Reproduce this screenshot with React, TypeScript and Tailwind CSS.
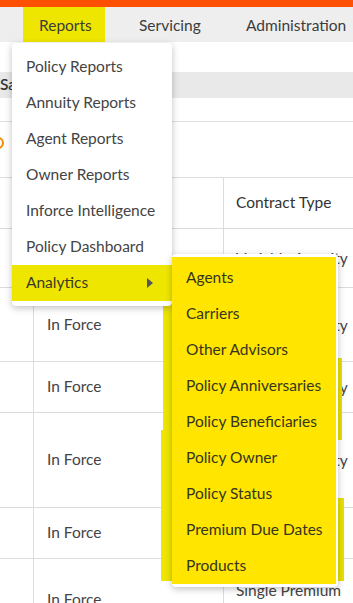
import * as React from "react";

const REPORT_ITEMS = [
  "Policy Reports",
  "Annuity Reports",
  "Agent Reports",
  "Owner Reports",
  "Inforce Intelligence",
  "Policy Dashboard",
];

const ANALYTICS_ITEMS = [
  "Agents",
  "Carriers",
  "Other Advisors",
  "Policy Anniversaries",
  "Policy Beneficiaries",
  "Policy Owner",
  "Policy Status",
  "Premium Due Dates",
  "Products",
];

type Row = { height: string; status: string; contract: string };

const ROWS: Row[] = [
  { height: "h-[59px]", status: "In Force", contract: "Variable Annuity" },
  { height: "h-[74px]", status: "In Force", contract: "Variable Annuity" },
  { height: "h-[51px]", status: "In Force", contract: "Variable Annuity" },
  { height: "h-[95px]", status: "In Force", contract: "Variable Annuity" },
  { height: "h-[51px]", status: "In Force", contract: "Fixed Annuity" },
  { height: "h-[82px]", status: "In Force", contract: "Single Premium Immediate Annuity" },
];

function NavBar() {
  return (
    <nav className="flex h-[35px] items-stretch bg-[#eeeeee] pt-[3px] text-[15.5px] text-[#3c3c3c]">
      <div className="w-[23px]" />
      <div className="-mt-[3px] flex w-[82px] items-center bg-[#efe600] pl-[16px] pt-[3px]">Reports</div>
      <div className="ml-[34px] flex w-[107px] items-center">Servicing</div>
      <div className="flex items-center whitespace-nowrap">Administration</div>
    </nav>
  );
}

function PolicyTable() {
  return (
    <div className="w-[440px] text-[15.5px] text-[#444]">
      <div className="flex h-[51px] border-b border-[#dcdcdc]">
        <div className="w-[33px]" />
        <div className="w-[190px] border-l border-[#dcdcdc]" />
        <div className="flex w-[150px] items-center border-l border-[#dcdcdc] pl-[12px] text-[#333]">
          Contract Type
        </div>
      </div>
      {ROWS.map((row, i) => (
        <div key={i} className={`flex border-b border-[#dcdcdc] ${row.height}`}>
          <div className="w-[33px]" />
          <div className="flex w-[190px] items-center border-l border-[#dcdcdc] pl-[13px]">
            {row.status}
          </div>
          <div className="flex w-[150px] items-center border-l border-[#dcdcdc] pl-[12px] leading-[20px]">
            {row.contract}
          </div>
        </div>
      ))}
    </div>
  );
}

function ReportsMenu() {
  return (
    <div className="absolute left-[12px] top-[43px] w-[160px] rounded-[4px] bg-white pb-[5px] pt-[6px] text-[15.5px] text-[#444] shadow-[0_2px_7px_rgba(0,0,0,0.25)]">
      {REPORT_ITEMS.map((label) => (
        <div key={label} className="flex h-[36px] items-center whitespace-nowrap pl-[14px]">
          {label}
        </div>
      ))}
      <div className="flex h-[36px] items-center justify-between bg-[#efe600] pl-[14px] pr-[19px] text-[#3a3a2a]">
        Analytics
        <svg width="6" height="10" viewBox="0 0 6 10" aria-hidden>
          <path d="M0 0 L6 5 L0 10 Z" fill="#555" />
        </svg>
      </div>
    </div>
  );
}

function AnalyticsMenu() {
  return (
    <div className="absolute left-[172px] top-[254px] w-[166px] rounded-[4px] bg-white pb-[3px] pr-[2px] pt-[3px] text-[15.5px] text-[#35351f] shadow-[0_2px_7px_rgba(0,0,0,0.25)]">
      <div className="bg-[#ffe500] pt-[3px]">
        {ANALYTICS_ITEMS.map((label) => (
          <div key={label} className="flex h-[36px] items-center whitespace-nowrap pl-[14px]">
            {label}
          </div>
        ))}
      </div>
    </div>
  );
}

export default function App() {
  return (
    <div className="relative h-[603px] w-[353px] overflow-hidden bg-white font-['Lato','Open_Sans',sans-serif]">
      <div className="h-[7px] bg-[#ff4f00]" />
      <NavBar />

      <div className="mt-[30px] flex h-[26px] items-center bg-[#e9e9e9] text-[15.5px] font-semibold text-[#333]">
        Saved Reports
      </div>
      <div className="h-[24px] border-b border-[#e2e2e2]" />
      <div className="flex h-[56px] items-start border-b border-[#dcdcdc] pt-[15px]">
        <span className="ml-[-8px] block h-[12px] w-[12px] rounded-full border-2 border-[#f08a00]" />
      </div>

      <PolicyTable />

      {/* highlighter marks around the analytics submenu */}
      <div className="absolute left-[163px] top-[299px] h-[131px] w-[10px] bg-[#efe500]" />
      <div className="absolute left-[161px] top-[430px] h-[151px] w-[12px] bg-[#efe500]" />
      <div className="absolute left-[338px] top-[358px] h-[82px] w-[4px] bg-[#e9e200]" />
      <div className="absolute left-[338px] top-[498px] h-[83px] w-[6px] bg-[#e9e200]" />

      <ReportsMenu />
      <AnalyticsMenu />
    </div>
  );
}
